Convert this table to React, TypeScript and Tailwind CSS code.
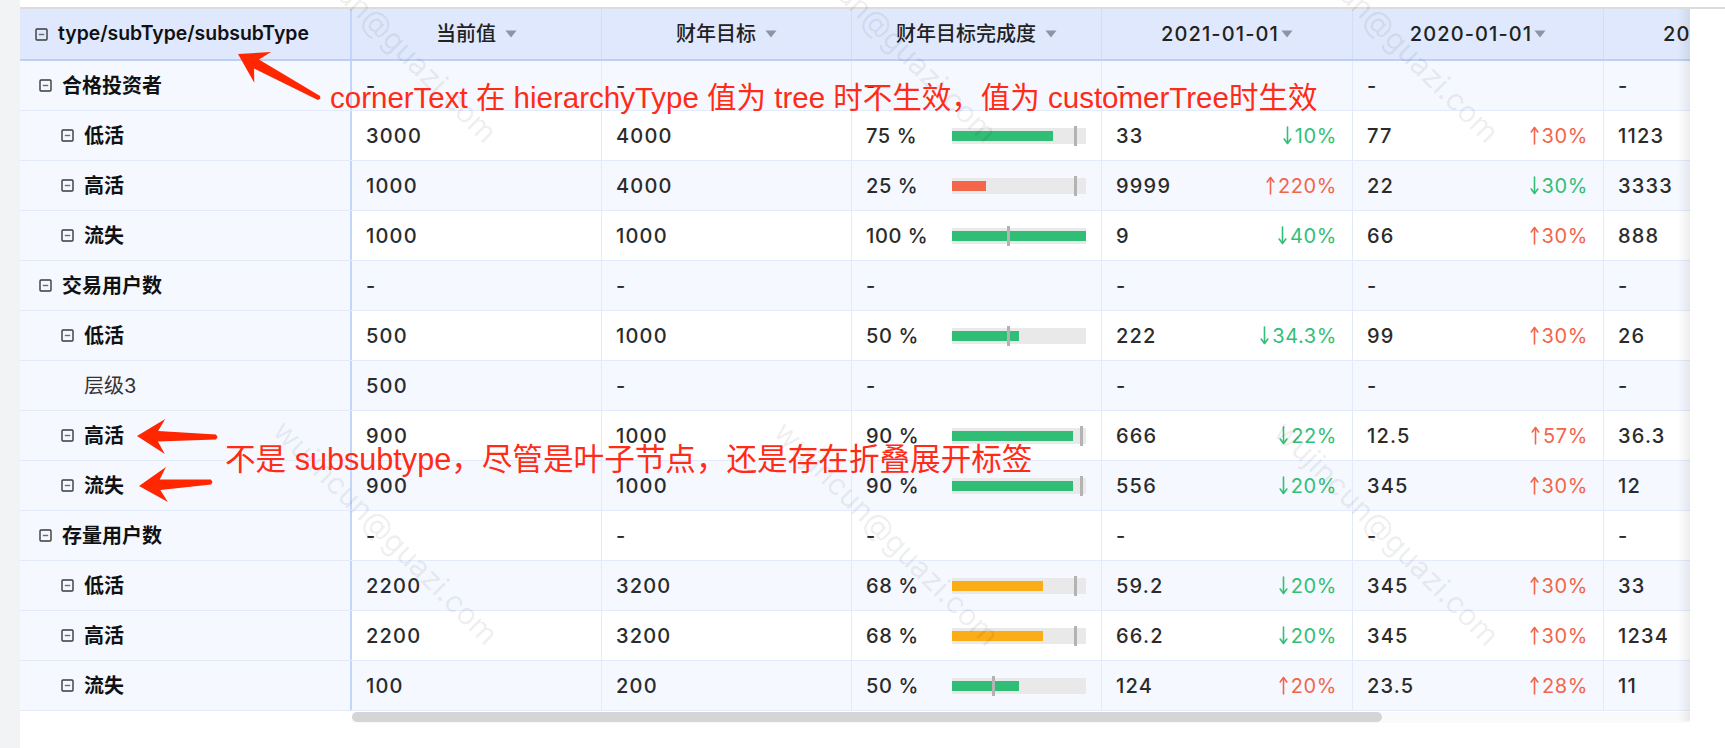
import React from "react";

type Chg = { v: string; c: string; up: boolean };
type Pct = { t: string; fill: number; marker: number; color: string };
type Row = {
  label: string;
  level: number;
  icon: boolean;
  bold: boolean;
  cur: string;
  target: string;
  pct: Pct | null;
  d21: Chg | null;
  d20: Chg | null;
  d19: string;
};

const G = "#30bd75";
const R = "#f4664a";
const O = "#fbad17";

const rows: Row[] = [
  { label: "合格投资者", level: 0, icon: true, bold: true, cur: "-", target: "-", pct: null, d21: null, d20: null, d19: "-" },
  { label: "低活", level: 1, icon: true, bold: true, cur: "3000", target: "4000", pct: { t: "75 %", fill: 0.75, marker: 0.925, color: G }, d21: { v: "33", c: "10%", up: false }, d20: { v: "77", c: "30%", up: true }, d19: "1123" },
  { label: "高活", level: 1, icon: true, bold: true, cur: "1000", target: "4000", pct: { t: "25 %", fill: 0.25, marker: 0.925, color: R }, d21: { v: "9999", c: "220%", up: true }, d20: { v: "22", c: "30%", up: false }, d19: "3333" },
  { label: "流失", level: 1, icon: true, bold: true, cur: "1000", target: "1000", pct: { t: "100 %", fill: 1, marker: 0.425, color: G }, d21: { v: "9", c: "40%", up: false }, d20: { v: "66", c: "30%", up: true }, d19: "888" },
  { label: "交易用户数", level: 0, icon: true, bold: true, cur: "-", target: "-", pct: null, d21: null, d20: null, d19: "-" },
  { label: "低活", level: 1, icon: true, bold: true, cur: "500", target: "1000", pct: { t: "50 %", fill: 0.5, marker: 0.42, color: G }, d21: { v: "222", c: "34.3%", up: false }, d20: { v: "99", c: "30%", up: true }, d19: "26" },
  { label: "层级3", level: 2, icon: false, bold: false, cur: "500", target: "-", pct: null, d21: null, d20: null, d19: "-" },
  { label: "高活", level: 1, icon: true, bold: true, cur: "900", target: "1000", pct: { t: "90 %", fill: 0.9, marker: 0.97, color: G }, d21: { v: "666", c: "22%", up: false }, d20: { v: "12.5", c: "57%", up: true }, d19: "36.3" },
  { label: "流失", level: 1, icon: true, bold: true, cur: "900", target: "1000", pct: { t: "90 %", fill: 0.9, marker: 0.97, color: G }, d21: { v: "556", c: "20%", up: false }, d20: { v: "345", c: "30%", up: true }, d19: "12" },
  { label: "存量用户数", level: 0, icon: true, bold: true, cur: "-", target: "-", pct: null, d21: null, d20: null, d19: "-" },
  { label: "低活", level: 1, icon: true, bold: true, cur: "2200", target: "3200", pct: { t: "68 %", fill: 0.68, marker: 0.925, color: O }, d21: { v: "59.2", c: "20%", up: false }, d20: { v: "345", c: "30%", up: true }, d19: "33" },
  { label: "高活", level: 1, icon: true, bold: true, cur: "2200", target: "3200", pct: { t: "68 %", fill: 0.68, marker: 0.925, color: O }, d21: { v: "66.2", c: "20%", up: false }, d20: { v: "345", c: "30%", up: true }, d19: "1234" },
  { label: "流失", level: 1, icon: true, bold: true, cur: "100", target: "200", pct: { t: "50 %", fill: 0.5, marker: 0.31, color: G }, d21: { v: "124", c: "20%", up: true }, d20: { v: "23.5", c: "28%", up: true }, d19: "11" },
];

function FoldIcon() {
  return (
    <svg width="13" height="13" viewBox="0 0 13 13" className="shrink-0">
      <rect x="1" y="1" width="11" height="11" rx="1" fill="none" stroke="#3a3a3a" strokeWidth="1.4" />
      <line x1="3.8" y1="6.5" x2="9.2" y2="6.5" stroke="#6b6b6b" strokeWidth="1.4" />
    </svg>
  );
}

function SortIcon() {
  return (
    <svg width="12" height="8" viewBox="0 0 12 8" className="shrink-0">
      <path d="M0.5 0.5 L11.5 0.5 L6 7.5 Z" fill="#8b95a5" />
    </svg>
  );
}

function ChgArrow({ up, color }: { up: boolean; color: string }) {
  return (
    <svg width="9" height="19" viewBox="0 0 9 19" className="shrink-0">
      {up ? (
        <g stroke={color} strokeWidth="1.6" fill="none" strokeLinecap="round" strokeLinejoin="round">
          <line x1="4.5" y1="2" x2="4.5" y2="18" />
          <polyline points="1.2,6 4.5,1.5 7.8,6" />
        </g>
      ) : (
        <g stroke={color} strokeWidth="1.6" fill="none" strokeLinecap="round" strokeLinejoin="round">
          <line x1="4.5" y1="1" x2="4.5" y2="17" />
          <polyline points="1.2,13 4.5,17.5 7.8,13" />
        </g>
      )}
    </svg>
  );
}

function ChangeCell({ d, bg, w }: { d: Chg | null; bg: string; w: string }) {
  const color = d && d.up ? "#f3654a" : "#33be77";
  return (
    <div className={`${w} ${bg} shrink-0 h-full flex items-center justify-between pl-[14px] pr-[15px] border-r border-[#e3ebfb]`}>
      <span className="text-[#2b2b2b] font-medium tracking-[1.2px]">{d ? d.v : "-"}</span>
      {d && (
        <span className="flex items-center gap-[3px] tracking-[0.6px]" style={{ color }}>
          <ChgArrow up={d.up} color={color} />
          <span>{d.c}</span>
        </span>
      )}
    </div>
  );
}

function arrowPoly(tail: [number, number], tip: [number, number]) {
  const dx = tail[0] - tip[0];
  const dy = tail[1] - tip[1];
  const len = Math.hypot(dx, dy);
  const ux = dx / len;
  const uy = dy / len;
  const nx = -uy;
  const ny = ux;
  const headLen = 28;
  const headHalf = 17.5;
  const neck = 21;
  const near = 5.2;
  const far = 2.4;
  const p = (a: number, b: number) => `${(tip[0] + ux * a + nx * b).toFixed(1)},${(tip[1] + uy * a + ny * b).toFixed(1)}`;
  return [
    p(0, 0),
    p(headLen, headHalf),
    p(neck, near),
    p(len, far),
    p(len + 1.5, 0),
    p(len, -far),
    p(neck, -near),
    p(headLen, -headHalf),
  ].join(" ");
}

const watermarks: [number, number][] = [
  [385, 30],
  [885, 30],
  [1387, 30],
  [386, 532],
  [887, 533],
  [1387, 533],
];

const headers = [
  { t: "当前值", w: "w-[250px]", g: "gap-[9px]", tr: "" },
  { t: "财年目标", w: "w-[250px]", g: "gap-[9px]", tr: "" },
  { t: "财年目标完成度", w: "w-[250px]", g: "gap-[9px]", tr: "" },
  { t: "2021-01-01", w: "w-[251px]", g: "gap-[2px]", tr: "tracking-[1.1px]" },
  { t: "2020-01-01", w: "w-[251px]", g: "gap-[2px]", tr: "tracking-[1.1px]" },
  { t: "2019-01-01", w: "w-[251px]", g: "gap-[2px]", tr: "tracking-[1.1px]" },
];

const dataCell = "w-[250px] shrink-0 h-full flex items-center pl-[14px] border-r border-[#e3ebfb] text-[#2b2b2b] font-medium tracking-[1.2px]";

export default function App() {
  return (
    <div className="relative w-[1725px] h-[748px] overflow-hidden bg-white flex font-['Inter','Noto_Sans_CJK_SC',sans-serif] text-[20px] leading-none">
      <div className="w-[20px] shrink-0 bg-[#f2f3f5]" />
      <div className="flex-1 flex flex-col min-w-0">
        <div className="h-[7px] shrink-0" />
        <div className="h-[2px] shrink-0 bg-[#dcdcdc]" />
        <div className="flex">
          <div className="relative w-[1670px] shrink-0 overflow-hidden">
            {/* header */}
            <div className="flex h-[52px] border-b-2 border-[#bcd0f7] bg-[#dfe8fc]">
              <div className="w-[332px] shrink-0 h-full flex items-center pl-[15px] gap-[10px] border-r-2 border-[#c3d5fa] font-semibold text-[19.4px] text-[#111]">
                <FoldIcon />
                <span>type/subType/subsubType</span>
              </div>
              {headers.map((h, i) => (
                <div key={i} className={`${h.w} ${h.g} shrink-0 h-full flex items-center justify-center border-r border-[#d2def8] font-medium text-[#222]`}>
                  <span className={h.tr}>{h.t}</span>
                  <SortIcon />
                </div>
              ))}
            </div>
            {/* rows */}
            {rows.map((r, i) => {
              const bg = i % 2 === 0 ? "bg-[#f5f8ff]" : "bg-white";
              const pl = r.level === 0 ? "pl-[19px]" : r.level === 1 ? "pl-[41px]" : "pl-[64px]";
              return (
                <div key={i} className="flex h-[50px] border-b border-[#e3ebfb]">
                  <div className={`w-[332px] shrink-0 h-full flex items-center gap-[10px] bg-[#f5f8ff] border-r-2 border-[#c3d5fa] ${pl}`}>
                    {r.icon && <FoldIcon />}
                    <span className={r.bold ? "font-bold text-[#111]" : "font-normal text-[#333]"}>{r.label}</span>
                  </div>
                  <div className={`${dataCell} ${bg}`}>{r.cur}</div>
                  <div className={`${dataCell} ${bg}`}>{r.target}</div>
                  <div className={`w-[250px] shrink-0 h-full flex items-center pl-[14px] pr-[15px] border-r border-[#e3ebfb] text-[#2b2b2b] font-medium ${bg}`}>
                    <span className="flex-1 tracking-[0.6px]">{r.pct ? r.pct.t : "-"}</span>
                    {r.pct && (
                      <div className="relative w-[134px] h-[16px] bg-[#e9e9e9]">
                        <div className="absolute left-0 top-[3px] h-[10px]" style={{ width: `${r.pct.fill * 100}%`, backgroundColor: r.pct.color }} />
                        <div className="absolute top-[-2px] w-[3px] h-[20px] bg-[#b3b3b3]" style={{ left: `${r.pct.marker * 134 - 1.5}px` }} />
                      </div>
                    )}
                  </div>
                  <ChangeCell d={r.d21} bg={bg} w="w-[251px]" />
                  <ChangeCell d={r.d20} bg={bg} w="w-[251px]" />
                  <div className={`${dataCell} w-[251px] ${bg}`}>{r.d19}</div>
                </div>
              );
            })}
            {/* scrollbar */}
            <div className="flex mt-[1px] h-[11px]">
              <div className="w-[332px] shrink-0" />
              <div className="flex-1 bg-[#fafafa] flex items-start">
                <div className="w-[1030px] h-[10px] rounded-full bg-[#d5d5d5]" />
              </div>
            </div>
            <div className="absolute right-0 top-0 h-[712px] w-[12px] bg-linear-to-l from-black/[0.07] to-transparent" />
          </div>
          <div className="flex-1" />
        </div>
      </div>

      {/* watermarks */}
      {watermarks.map(([x, y], i) => (
        <div
          key={i}
          className="absolute pointer-events-none whitespace-nowrap text-[30px] text-black/[0.08] font-normal -translate-x-1/2 -translate-y-1/2 rotate-45"
          style={{ left: x, top: y }}
        >
          wujincun@guazi.com
        </div>
      ))}

      {/* annotations */}
      <svg className="absolute left-0 top-0 pointer-events-none" width="1725" height="748">
        <polygon points={arrowPoly([319, 98], [238, 54])} fill="#ff2600" />
        <polygon points={arrowPoly([216, 437], [137, 436])} fill="#ff2600" />
        <polygon points={arrowPoly([211, 482], [139, 486])} fill="#ff2600" />
      </svg>
      <div className="absolute left-[330px] top-[83px] whitespace-nowrap text-[29.5px] leading-none text-[#ff2b17] font-['Liberation_Sans','Noto_Sans_CJK_SC',sans-serif]">
        cornerText 在 hierarchyType 值为 tree 时不生效，值为 customerTree时生效
      </div>
      <div className="absolute left-[225px] top-[444px] whitespace-nowrap text-[30.6px] leading-none text-[#ff2b17] font-['Liberation_Sans','Noto_Sans_CJK_SC',sans-serif]">
        不是 subsubtype，尽管是叶子节点，还是存在折叠展开标签
      </div>
    </div>
  );
}
